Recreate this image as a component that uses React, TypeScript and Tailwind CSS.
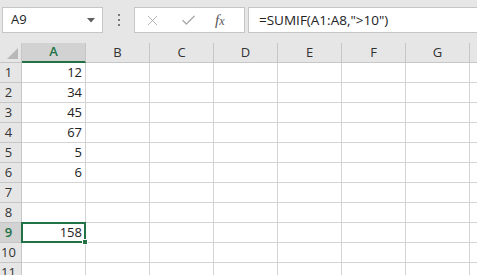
import { X, Check } from 'lucide-react';

const cols = ['A', 'B', 'C', 'D', 'E', 'F', 'G'];
const values: Record<number, string> = { 1: '12', 2: '34', 3: '45', 4: '67', 5: '5', 6: '6', 9: '158' };
const rows = [1, 2, 3, 4, 5, 6, 7, 8, 9, 10, 11];

function Toolbar() {
  return (
    <div className="flex h-[43px] bg-[#e6e6e6] pt-[7px] pb-[10px]">
      <div className="ml-[2px] flex h-[26px] w-[101px] items-center justify-between border border-[#c6c6c6] bg-white pl-[8px] pr-[7px] text-[13px] text-[#222]">
        <span>A9</span>
        <svg width="8" height="5" viewBox="0 0 8 5">
          <path d="M0 0h8L4 4.5z" fill="#5f5f5f" />
        </svg>
      </div>
      <div className="flex w-[31px] flex-col items-center justify-center gap-[3px]">
        <span className="h-[2px] w-[2px] bg-[#7a7a7a]" />
        <span className="h-[2px] w-[2px] bg-[#7a7a7a]" />
        <span className="h-[2px] w-[2px] bg-[#7a7a7a]" />
      </div>
      <div className="flex h-[26px] w-[111px] items-center border border-[#c6c6c6] bg-white">
        <X className="ml-[9px] h-[17px] w-[17px] text-[#a8a8a8]" strokeWidth={1.2} />
        <Check className="ml-[19px] h-[17px] w-[17px] text-[#a8a8a8]" strokeWidth={1.8} />
        <span className="ml-[18px] font-['Liberation_Serif',serif] text-[15px] italic text-[#555]">
          f<span className="text-[12px]">x</span>
        </span>
      </div>
      <div className="ml-[3px] flex h-[26px] flex-1 items-center border border-r-0 border-[#c6c6c6] bg-white pl-[10px] text-[13.5px] text-[#222]">
        =SUMIF(A1:A8,"&gt;10")
      </div>
    </div>
  );
}

function Grid() {
  return (
    <div className="grid grid-cols-[22px_repeat(7,64px)_1fr] grid-rows-[20px] auto-rows-[20px] bg-white text-[13px] text-[#222]">
      <div className="relative border-b border-r border-[#c6c6c6] bg-[#e6e6e6]">
        <svg className="absolute bottom-[3px] right-[3px]" width="11" height="11" viewBox="0 0 11 11">
          <path d="M11 0V11H0z" fill="#b8b8b8" />
        </svg>
      </div>
      {cols.map((c) =>
        c === 'A' ? (
          <div
            key={c}
            className="flex items-center justify-center border-b-2 border-r border-b-[#217346] border-r-[#c6c6c6] bg-[#d2d2d2] font-semibold text-[#217346]"
          >
            {c}
          </div>
        ) : (
          <div key={c} className="flex items-center justify-center border-b border-r border-[#c6c6c6] bg-[#e6e6e6] text-[#333]">
            {c}
          </div>
        ),
      )}
      <div className="border-b border-[#c6c6c6] bg-[#e6e6e6]" />
      {rows.map((r) => (
        <Row key={r} r={r} />
      ))}
    </div>
  );
}

function Row({ r }: { r: number }) {
  const sel = r === 9;
  return (
    <>
      <div
        className={
          sel
            ? 'flex items-center justify-center border-b border-r border-[#c6c6c6] bg-[#d2d2d2] pr-[4px] font-semibold text-[#217346]'
            : 'flex items-center justify-center border-b border-r border-[#c6c6c6] bg-[#e6e6e6] pr-[4px] text-[#333]'
        }
      >
        {r}
      </div>
      {cols.map((c) =>
        c === 'A' && sel ? (
          <div key={c} className="relative -ml-[1px] -mt-[1px] flex h-[21px] items-center justify-end border-2 border-[#217346] pr-[2px]">
            {values[r]}
            <span className="absolute -bottom-[4px] -right-[4px] h-[6px] w-[6px] border border-white bg-[#217346]" />
          </div>
        ) : (
          <div key={c} className="flex items-center justify-end border-b border-r border-[#d4d4d4] pr-[3px]">
            {c === 'A' ? values[r] : ''}
          </div>
        ),
      )}
      <div className="border-b border-[#d4d4d4]" />
    </>
  );
}

export default function App() {
  return (
    <div className="h-[275px] w-[477px] overflow-hidden bg-white font-['Open_Sans',sans-serif]">
      <Toolbar />
      <Grid />
    </div>
  );
}
